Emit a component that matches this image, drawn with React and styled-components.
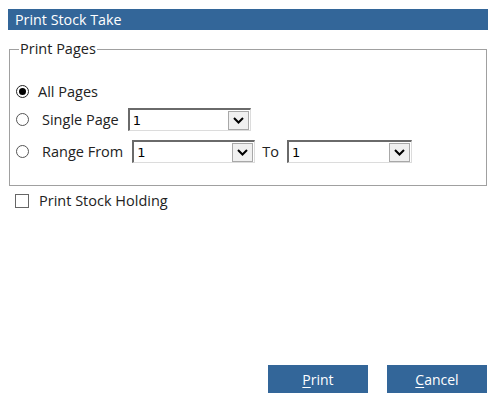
import React from "react";
import styled, { createGlobalStyle } from "styled-components";

const Global = createGlobalStyle`
  html, body { margin: 0; padding: 0; background: #fff; }
  body { font-family: "Open Sans", "Noto Sans", sans-serif; color: #222; }
`;

const Page = styled.div`
  box-sizing: border-box;
  width: 498px;
  height: 400px;
  padding: 9px 10px 7px 8px;
  display: flex;
  flex-direction: column;
`;

const TitleBar = styled.div`
  height: 21px;
  line-height: 21px;
  background: #336699;
  color: #fff;
  font-size: 14.3px;
  padding-left: 7px;
`;

const Fieldset = styled.fieldset`
  margin: 9px 1px 0 1px;
  border: 1px solid #a0a0a0;
  padding: 0 8px 22px 6px;
  display: flex;
  flex-direction: column;
  min-width: 0;
`;

const Legend = styled.legend`
  margin-left: 3px;
  padding: 0 1px;
  font-size: 14.5px;
  line-height: 20px;
  color: #222;
`;

const Row = styled.div`
  display: flex;
  align-items: center;
  height: 23px;
  margin-top: ${(p) => p.$mt || 0}px;
  font-size: 14.5px;
`;

const RadioDot = styled.span`
  box-sizing: border-box;
  width: 13px;
  height: 13px;
  border-radius: 50%;
  border: 1px solid ${(p) => (p.$on ? "#222" : "#555")};
  background: #fff;
  display: inline-flex;
  align-items: center;
  justify-content: center;
  flex: none;
  &::after {
    content: "";
    width: 7px;
    height: 7px;
    border-radius: 50%;
    background: ${(p) => (p.$on ? "#000" : "transparent")};
  }
`;

const Label = styled.span`
  margin-left: ${(p) => p.$ml ?? 13}px;
  margin-right: ${(p) => p.$mr ?? 6}px;
  white-space: nowrap;
`;

const Select = styled.div`
  box-sizing: border-box;
  width: ${(p) => p.$w || 122}px;
  height: 23px;
  border-top: 2px solid #6a6a6a;
  border-left: 2px solid #6a6a6a;
  border-right: 1px solid #dcdcdc;
  border-bottom: 1px solid #dcdcdc;
  background: #fff;
  display: flex;
  align-items: center;
  padding-left: 3px;
  font-family: "DejaVu Sans", Verdana, sans-serif;
  font-size: 13px;
  color: #000;
`;

const SelectValue = styled.span`
  flex: 1;
`;

const DropButton = styled.span`
  box-sizing: border-box;
  width: 21px;
  height: 19px;
  margin-right: 1px;
  border: 1px solid #a8a8a8;
  background: #f0f0f0;
  display: flex;
  align-items: center;
  justify-content: center;
`;

const Chevron = () => (
  <svg width="11" height="7" viewBox="0 0 11 7">
    <path d="M1 1 L5.5 5.5 L10 1" fill="none" stroke="#000" strokeWidth="2" />
  </svg>
);

const Dropdown = ({ value, width }) => (
  <Select $w={width}>
    <SelectValue>{value}</SelectValue>
    <DropButton>
      <Chevron />
    </DropButton>
  </Select>
);

const CheckRow = styled.div`
  display: flex;
  align-items: center;
  margin: 5px 0 0 7px;
  font-size: 14.5px;
`;

const CheckBox = styled.span`
  box-sizing: border-box;
  width: 14px;
  height: 14px;
  border: 1px solid #666;
  background: #fff;
  flex: none;
`;

const ButtonRow = styled.div`
  margin-top: auto;
  display: flex;
  justify-content: flex-end;
  gap: 19px;
  padding-right: 1px;
`;

const Button = styled.button`
  width: 100px;
  height: 28px;
  border: none;
  background: #336699;
  color: #fff;
  font-family: "Open Sans", "Noto Sans", sans-serif;
  font-size: 14px;
  padding: 0;
  cursor: pointer;
  u { text-decoration: underline; text-underline-offset: 2px; }
`;

export default function App() {
  return (
    <>
      <Global />
      <Page>
        <TitleBar>Print Stock Take</TitleBar>
        <Fieldset>
          <Legend>Print Pages</Legend>
          <Row $mt={21}>
            <RadioDot $on />
            <Label $ml={9}>All Pages</Label>
          </Row>
          <Row $mt={5}>
            <RadioDot />
            <Label $ml={13} $mr={9}>Single Page</Label>
            <Dropdown value="1" width={123} />
          </Row>
          <Row $mt={9}>
            <RadioDot />
            <Label $ml={13} $mr={9}>Range From</Label>
            <Dropdown value="1" width={123} />
            <Label $ml={7} $mr={8}>To</Label>
            <Dropdown value="1" width={125} />
          </Row>
        </Fieldset>
        <CheckRow>
          <CheckBox />
          <Label $ml={10}>Print Stock Holding</Label>
        </CheckRow>
        <ButtonRow>
          <Button><u>P</u>rint</Button>
          <Button><u>C</u>ancel</Button>
        </ButtonRow>
      </Page>
    </>
  );
}
